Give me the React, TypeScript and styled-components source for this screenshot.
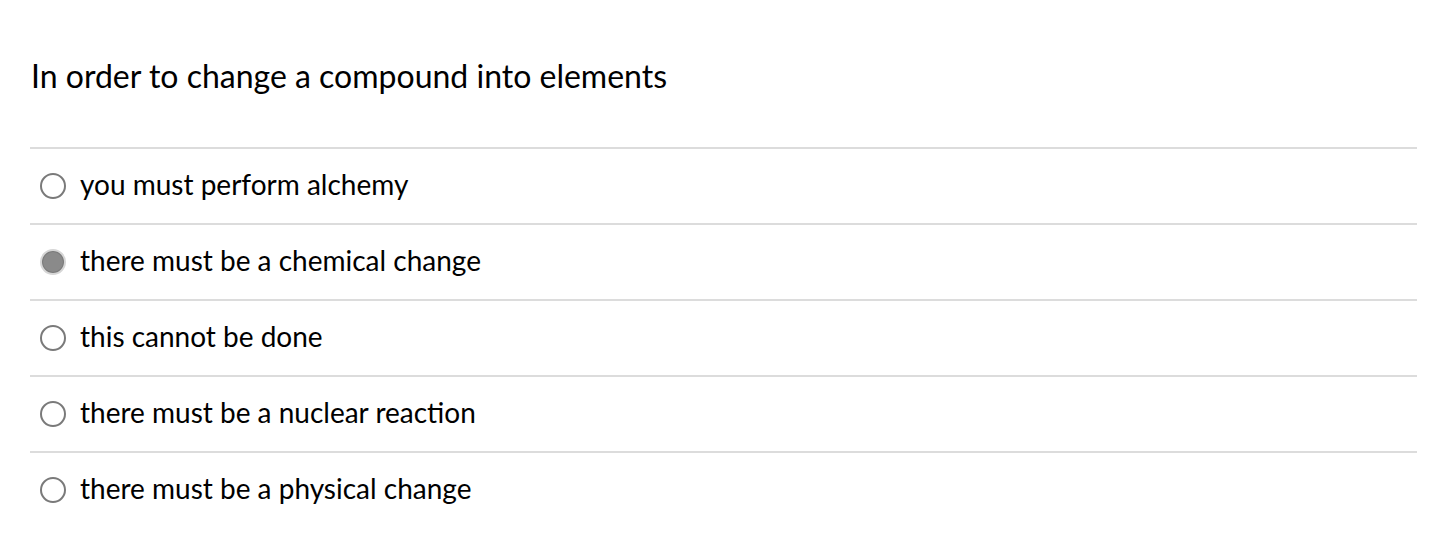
import React from 'react';
import styled, { createGlobalStyle } from 'styled-components';

const GlobalStyle = createGlobalStyle`
  html, body {
    margin: 0;
    padding: 0;
    background: #ffffff;
  }
  body {
    font-family: Lato, "Open Sans", "Liberation Sans", sans-serif;
    color: #000000;
  }
`;

const Question = styled.div`
  padding: 55px 13px 0 30px;
  width: 1387px;
`;

const Prompt = styled.div`
  font-size: 32px;
  line-height: 42px;
  height: 42px;
  margin-bottom: 50px;
  padding-left: 1px;
`;

const AnswerList = styled.div`
  display: flex;
  flex-direction: column;
`;

const Answer = styled.label`
  display: flex;
  align-items: center;
  height: 74px;
  border-top: 2px solid #dcdcdc;
  cursor: pointer;
`;

const Radio = styled.span<{ checked?: boolean }>`
  box-sizing: border-box;
  width: 26px;
  height: 26px;
  border-radius: 50%;
  margin-left: 10px;
  margin-right: 14px;
  border: 2px solid ${p => (p.checked ? '#d6d6d6' : '#7a7a7a')};
  background: ${p => (p.checked ? '#8a8a8a' : '#ffffff')};
  box-shadow: ${p => (p.checked ? 'inset 0 0 0 1px #7a7a7a' : 'none')};
  flex-shrink: 0;
`;

const AnswerText = styled.span`
  font-size: 28px;
  line-height: 34px;
  margin-top: -4px;
`;

const answers = [
  { text: 'you must perform alchemy', checked: false },
  { text: 'there must be a chemical change', checked: true },
  { text: 'this cannot be done', checked: false },
  { text: 'there must be a nuclear reaction', checked: false },
  { text: 'there must be a physical change', checked: false },
];

const App: React.FC = () => {
  return (
    <>
      <GlobalStyle />
      <Question>
        <Prompt>In order to change a compound into elements</Prompt>
        <AnswerList>
          {answers.map(a => (
            <Answer key={a.text}>
              <Radio checked={a.checked} />
              <AnswerText>{a.text}</AnswerText>
            </Answer>
          ))}
        </AnswerList>
      </Question>
    </>
  );
};

export default App;
